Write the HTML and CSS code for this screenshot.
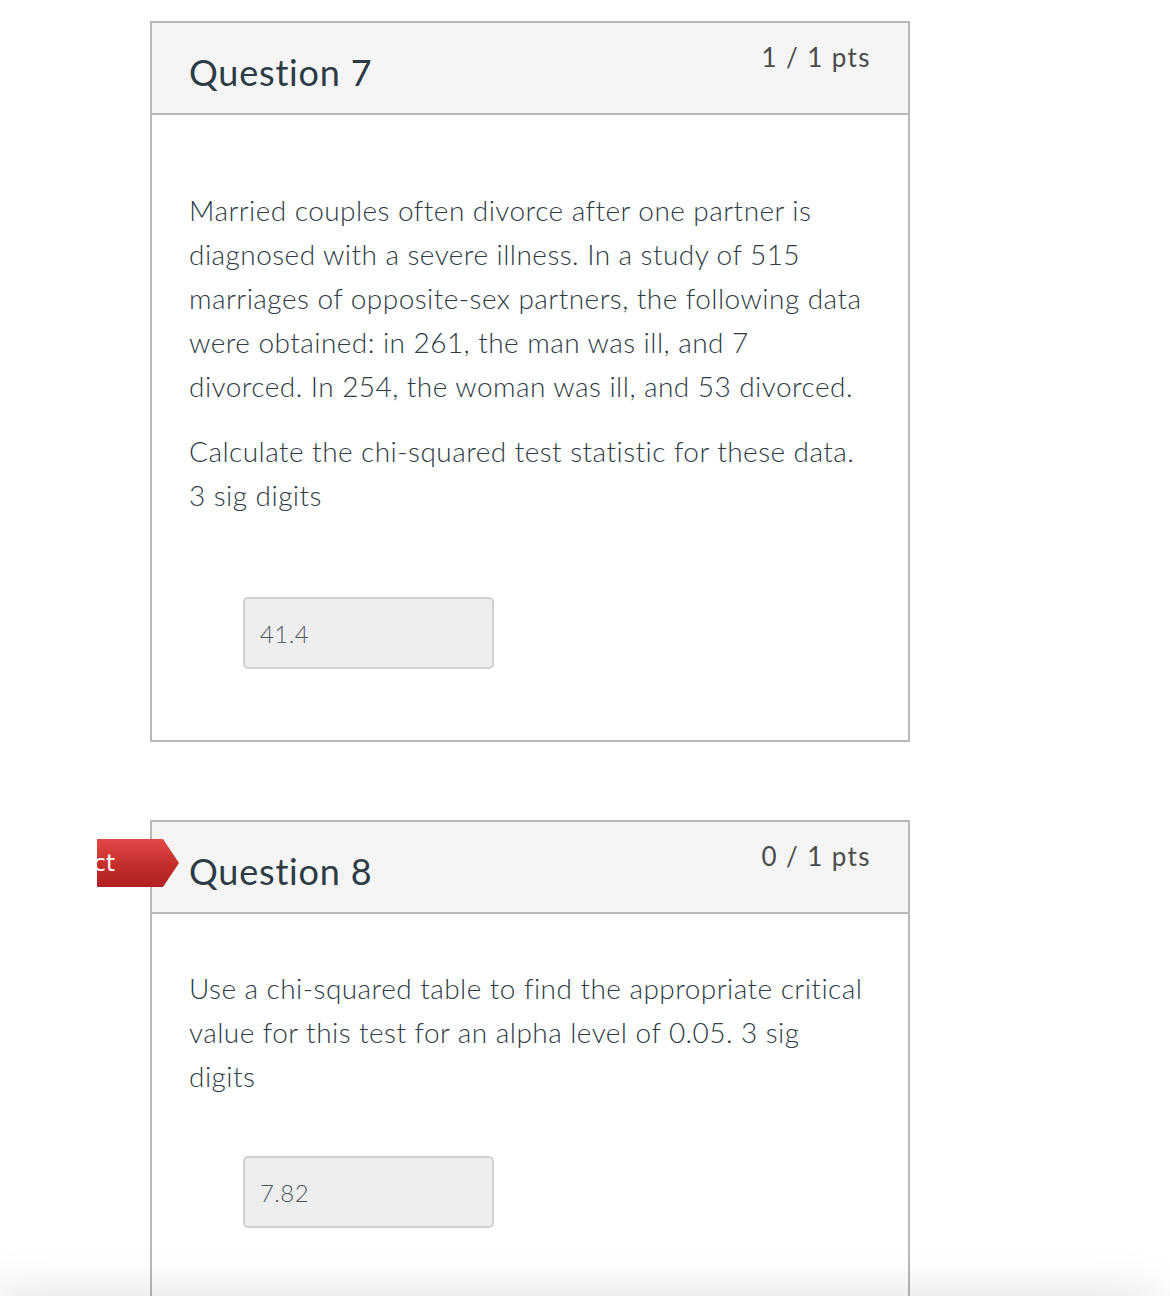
FILE: index.html
```html
<!DOCTYPE html>
<html lang="en">
<head>
<meta charset="utf-8">
<title>Quiz</title>
<link rel="stylesheet" href="styles.css">
</head>
<body>
<main class="quiz">
  <section class="card">
    <header class="card-header">
      <h2 class="q-title">Question 7</h2>
      <div class="q-pts">1 / 1 pts</div>
    </header>
    <div class="card-body body-q7">
      <p>Married couples often divorce after one partner is diagnosed with a severe illness. In a study of 515 marriages of opposite-sex partners, the following data were obtained: in 261, the man was ill, and 7 divorced. In 254, the woman was ill, and 53 divorced.</p>
      <p>Calculate the chi-squared test statistic for these data. 3 sig digits</p>
      <div class="answer answer-q7">41.4</div>
    </div>
  </section>

  <section class="card card-q8">
    <div class="tag-clip"><div class="tag">Incorrect</div></div>
    <header class="card-header">
      <h2 class="q-title">Question 8</h2>
      <div class="q-pts">0 / 1 pts</div>
    </header>
    <div class="card-body body-q8">
      <p>Use a chi-squared table to find the appropriate critical value for this test for an alpha level of 0.05. 3 sig digits</p>
      <div class="answer answer-q8">7.82</div>
    </div>
  </section>
</main>
<div class="footer-shadow"></div>
</body>
</html>
```
FILE: styles.css
```css
html, body {
  margin: 0;
  padding: 0;
  background: #ffffff;
}
body {
  font-family: Lato, "Open Sans", "Liberation Sans", sans-serif;
  color: #2d3b45;
  overflow: hidden;
  height: 1296px;
}
.quiz {
  padding: 21px 0 0 150px;
  width: 760px;
}
.card {
  position: relative;
  box-sizing: border-box;
  width: 760px;
  border: 2px solid #b8b8b8;
  background: #fff;
}
.card-q8 {
  margin-top: 78px;
}
.card-header {
  box-sizing: border-box;
  height: 92px;
  background: #f5f5f5;
  border-bottom: 2px solid #b8b8b8;
  display: flex;
  justify-content: space-between;
  align-items: flex-start;
  padding: 0 37px 0 37px;
}
.q-title {
  margin: 0;
  padding-top: 28px;
  font-size: 36px;
  font-weight: 400;
  line-height: 42px;
  letter-spacing: 0.8px;
  color: #2d3b45;
}
.q-pts {
  padding-top: 19px;
  font-size: 26px;
  line-height: 30px;
  color: #4b4b4b;
  letter-spacing: 1.4px;
}
.card-body {
  padding: 0 42px 0 37px;
}
.card-body p {
  margin: 0 0 21px 0;
  font-size: 28px;
  line-height: 44px;
  font-weight: 300;
  letter-spacing: 0.45px;
  color: #2d3b45;
}
.card-body p:last-of-type {
  margin-bottom: 0;
}
.body-q7 {
  padding-top: 73px;
  padding-bottom: 71px;
}
.body-q8 {
  padding-top: 52px;
  padding-bottom: 70px;
}
.answer {
  box-sizing: border-box;
  width: 251px;
  height: 72px;
  margin-left: 54px;
  background: #eeeeee;
  border: 2px solid #d0d0d0;
  border-radius: 5px;
  padding-left: 15px;
  display: flex;
  align-items: center;
  font-size: 24px;
  font-weight: 300;
  letter-spacing: 0.4px;
  color: #4f5b62;
}
.answer-q7 { margin-top: 80px; }
.answer-q8 { margin-top: 58px; }

.tag-clip {
  position: absolute;
  left: -55px;
  top: 17px;
  width: 82px;
  height: 49px;
  overflow: hidden;
}
.tag {
  position: absolute;
  right: 0;
  top: 0;
  width: 200px;
  height: 48px;
  box-sizing: border-box;
  padding-right: 64px;
  text-align: right;
  font-family: "DejaVu Sans", sans-serif;
  font-size: 23px;
  line-height: 48px;
  color: #ffffff;
  background: linear-gradient(#e34848, #c22b2b 60%, #b02222);
  clip-path: polygon(0 0, 184px 0, 200px 50%, 184px 100%, 0 100%);
}
.footer-shadow {
  position: fixed;
  left: 0;
  right: 10px;
  top: 1300px;
  height: 40px;
  border-radius: 0 30px 0 0;
  box-shadow: 0 0 50px 6px rgba(0, 0, 0, 0.13);
  background: #fff;
}
```
